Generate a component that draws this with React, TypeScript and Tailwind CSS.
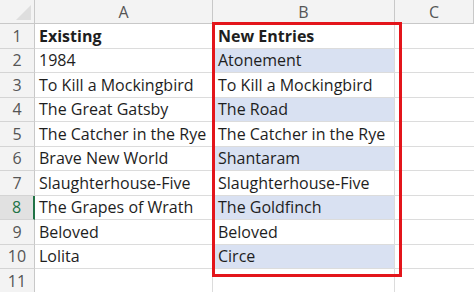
const colA = [
  "Existing",
  "1984",
  "To Kill a Mockingbird",
  "The Great Gatsby",
  "The Catcher in the Rye",
  "Brave New World",
  "Slaughterhouse-Five",
  "The Grapes of Wrath",
  "Beloved",
  "Lolita",
];

const colB = [
  "New Entries",
  "Atonement",
  "To Kill a Mockingbird",
  "The Road",
  "The Catcher in the Rye",
  "Shantaram",
  "Slaughterhouse-Five",
  "The Goldfinch",
  "Beloved",
  "Circe",
];

// rows whose entry in B differs from A get the blue fill
const changed = [false, true, false, true, false, true, false, true, false, true];

const font = { fontFamily: "'Open Sans', 'Liberation Sans', sans-serif" };

export default function App() {
  return (
    <div className="relative w-[474px] h-[292px] overflow-hidden bg-white" style={font}>
      <div className="grid grid-cols-[35px_178px_182px_79px] grid-rows-[24px_repeat(11,24.5px)]">
        {/* header row */}
        <div className="relative bg-[#f3f3f3] border-r border-b border-[#c8c8c8]">
          <div className="absolute right-[3px] bottom-[3px] w-0 h-0 border-l-[15px] border-l-transparent border-b-[15px] border-b-[#dedede]" />
        </div>
        {["A", "B", "C"].map((c) => (
          <div
            key={c}
            className="flex items-center justify-center bg-[#f3f3f3] border-r border-b border-[#c8c8c8] text-[16px] leading-none text-[#555]"
          >
            {c}
          </div>
        ))}

        {Array.from({ length: 11 }).map((_, i) => {
          const sel = i === 7;
          return [
            <div
              key={`h${i}`}
              className={
                sel
                  ? "flex items-center justify-center bg-[#e1e1e1] border-r-2 border-r-[#217346] border-b border-b-[#d4d4d4] text-[16px] leading-none text-[#217346]"
                  : "flex items-center justify-center bg-[#f3f3f3] border-r border-r-[#c8c8c8] border-b border-b-[#d4d4d4] text-[16px] leading-none text-[#555]"
              }
            >
              {i + 1}
            </div>,
            <div
              key={`a${i}`}
              className={
                "flex items-center pl-[4px] border-r border-b border-[#dcdcdc] text-[16px] leading-none text-[#1e1e1e] whitespace-nowrap " +
                (i === 0 ? "font-bold" : "")
              }
            >
              {colA[i] ?? ""}
            </div>,
            <div
              key={`b${i}`}
              className={
                "flex items-center pl-[5px] border-r border-b border-[#dcdcdc] text-[16px] leading-none text-[#1e1e1e] whitespace-nowrap " +
                (i === 0 ? "font-bold " : "") +
                (changed[i] ? "bg-[#d9e1f2]" : "")
              }
            >
              {colB[i] ?? ""}
            </div>,
            <div key={`c${i}`} className="border-b border-[#dcdcdc]" />,
          ];
        })}
      </div>

      {/* red outline around column B */}
      <div className="absolute left-[212px] top-[22px] w-[190px] h-[255px] border-[3px] border-[#e3151b]" />
    </div>
  );
}
